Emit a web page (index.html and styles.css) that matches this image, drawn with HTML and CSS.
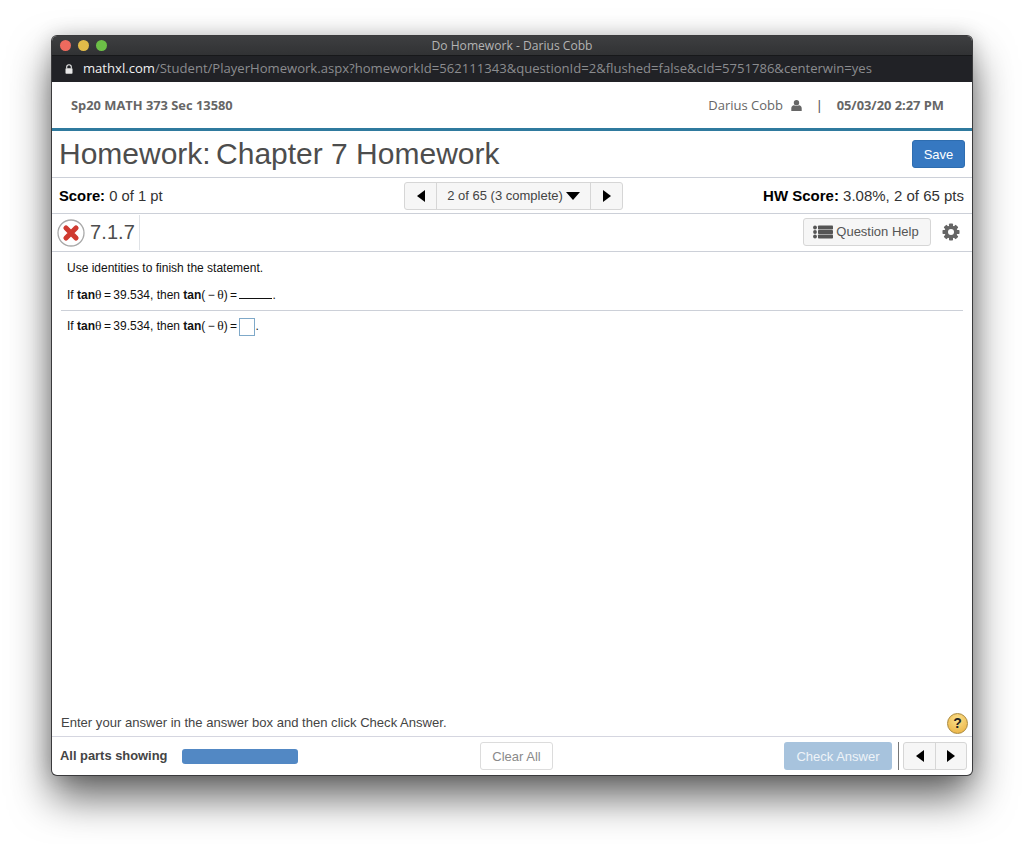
FILE: index.html
```html
<!DOCTYPE html>
<html lang="en">
<head>
    <meta charset="UTF-8">
    <title>Do Homework - Darius Cobb</title>
    <link rel="stylesheet" href="styles.css">
</head>
<body>
    <div class="window">
        <div class="titlebar">
            <div class="lights">
                <span class="light red"></span>
                <span class="light yellow"></span>
                <span class="light green"></span>
            </div>
            <span class="window-title">Do Homework - Darius Cobb</span>
        </div>
        <div class="urlbar">
            <svg class="lock" width="8" height="10" viewBox="0 0 8 10"><path d="M1.700 4.500V3a2.300 2.300 0 0 1 4.600 0v1.500" fill="none" stroke="#e8e8e8" stroke-width="1.100"/><rect x="0.500" y="4.300" width="7" height="5.400" rx="0.800" fill="#e8e8e8"/></svg>
            <span class="url"><span class="host">mathxl.com</span>/Student/PlayerHomework.aspx?homeworkId=562111343&amp;questionId=2&amp;flushed=false&amp;cId=5751786&amp;centerwin=yes</span>
        </div>

        <header class="course-bar">
            <span class="course">Sp20 MATH 373 Sec 13580</span>
            <div class="user-info">
                <span class="user-name">Darius Cobb</span>
                <svg class="user-icon" width="11" height="11" viewBox="0 0 11 11"><circle cx="5.500" cy="2.800" r="2.700" fill="#666"/><path d="M0.300 11V8.200C0.300 6.500 1.500 5.400 3 5.200c1.500 1 3.500 1 5 0 1.500 .2 2.700 1.300 2.700 3V11z" fill="#666"/></svg>
                <span class="sep">|</span>
                <span class="date">05/03/20 2:27 PM</span>
            </div>
        </header>

        <div class="title-row">
            <h1><span class="title-first">Homework:</span> Chapter 7 Homework</h1>
            <button class="btn-save">Save</button>
        </div>

        <div class="score-row">
            <div class="score"><b>Score:</b> 0 of 1 pt</div>
            <div class="pager">
                <span class="pager-arrow"><i class="tri-left"></i></span>
                <span class="pager-label">2 of 65 (3 complete)<i class="tri-down"></i></span>
                <span class="pager-arrow"><i class="tri-right"></i></span>
            </div>
            <div class="hw-score"><b>HW Score:</b> 3.08%, 2 of 65 pts</div>
        </div>

        <div class="question-row">
            <div class="question-id">
                <svg width="28" height="28" viewBox="0 0 28 28">
                    <circle cx="14" cy="14" r="13" fill="#fff" stroke="#a9a9a9" stroke-width="1.300"/>
                    <path d="M9 9L19 19M19 9L9 19" stroke="#cf3a30" stroke-width="5.200" stroke-linecap="round"/>
                </svg>
                <span class="question-num">7.1.7</span>
            </div>
            <div class="question-tools">
                <button class="btn-help">
                    <svg width="20" height="14" viewBox="0 0 20 14" fill="#555">
                        <circle cx="2" cy="2.500" r="1.900"/><circle cx="2" cy="7" r="1.900"/><circle cx="2" cy="11.500" r="1.900"/>
                        <rect x="5" y="0.500" width="15" height="4" rx="0.800"/><rect x="5" y="5" width="15" height="4" rx="0.800"/><rect x="5" y="9.500" width="15" height="4" rx="0.800"/>
                    </svg>
                    Question Help
                </button>
                <svg class="gear" width="18" height="18" viewBox="0 0 18 18">
                    <g fill="#666">
                        <rect x="7" y="0.500" width="4" height="17" rx="0.800"/>
                        <rect x="7" y="0.500" width="4" height="17" rx="0.800" transform="rotate(45 9 9)"/>
                        <rect x="7" y="0.500" width="4" height="17" rx="0.800" transform="rotate(90 9 9)"/>
                        <rect x="7" y="0.500" width="4" height="17" rx="0.800" transform="rotate(135 9 9)"/>
                        <circle cx="9" cy="9" r="6.500"/>
                    </g>
                    <circle cx="9" cy="9" r="3" fill="#fff"/>
                </svg>
            </div>
        </div>

        <main class="content">
            <p class="instr">Use identities to finish the statement.</p>
            <p class="stmt">If <b>tan</b><span class="theta">&#952;</span>&#8201;=&#8201;39.534, then <b>tan</b>(&#8201;&#8722;&#8201;<span class="theta">&#952;</span>)&#8201;=&#8201;<span class="blank"></span>.</p>
            <hr>
            <p class="stmt answer-line">If <b>tan</b><span class="theta">&#952;</span>&#8201;=&#8201;39.534, then <b>tan</b>(&#8201;&#8722;&#8201;<span class="theta">&#952;</span>)&#8201;=&#8201;<span class="answer-box"></span>.</p>
        </main>

        <div class="hint-row">
            <span class="hint-text">Enter your answer in the answer box and then click Check Answer.</span>
            <span class="help-ball">?</span>
        </div>

        <footer class="action-row">
            <div class="parts">
                <b>All parts showing</b>
                <span class="progress"></span>
            </div>
            <button class="btn-clear">Clear All</button>
            <div class="actions">
                <button class="btn-check">Check Answer</button>
                <span class="divider"></span>
                <div class="mini-pager">
                    <span class="mini-arrow"><i class="tri-left"></i></span>
                    <span class="mini-arrow"><i class="tri-right"></i></span>
                </div>
            </div>
        </footer>
    </div>
</body>
</html>
```

FILE: styles.css
```css
html, body {
    height: 100%;
}

body {
    margin: 0;
    padding: 36px 0 0 52px;
    box-sizing: border-box;
    background-color: #fff;
    font-family: "Liberation Sans", Arial, sans-serif;
    overflow: hidden;
}

.window {
    width: 920px;
    height: 739px;
    display: flex;
    flex-direction: column;
    background-color: #fff;
    border-radius: 5px;
    overflow: hidden;
    box-shadow: 0 0 0 1px #3a3a3c, 0 22px 42px rgba(0, 0, 0, 0.62), 0 0 20px rgba(0, 0, 0, 0.18);
}

.titlebar {
    height: 20px;
    flex: none;
    position: relative;
    display: flex;
    align-items: center;
    justify-content: center;
    background: linear-gradient(to bottom, #3e3f41, #313234);
    border-bottom: 1px solid #17181a;
    box-sizing: border-box;
}

.lights {
    position: absolute;
    left: 8px;
    top: 4px;
    display: flex;
    gap: 7px;
}

.light {
    width: 11px;
    height: 11px;
    border-radius: 50%;
}

.red { background-color: #ed6a5e; }
.yellow { background-color: #e2bb49; }
.green { background-color: #6cbf47; }

.window-title {
    font-family: "Open Sans", sans-serif;
    font-size: 12.100px;
    color: #b4b4b4;
}

.urlbar {
    height: 26px;
    flex: none;
    display: flex;
    align-items: center;
    gap: 10px;
    padding-left: 13px;
    background-color: #212226;
    box-sizing: border-box;
}

.url {
    margin-bottom: 2px;
    font-family: "Open Sans", sans-serif;
    font-size: 13.080px;
    color: #8b8c8f;
    white-space: nowrap;
}

.host {
    color: #f0f0f0;
}

.course-bar {
    height: 46px;
    flex: none;
    display: flex;
    align-items: center;
    justify-content: space-between;
    padding: 0 28px 0 19px;
    font-family: "Open Sans", sans-serif;
    font-size: 12.870px;
    color: #666;
}

.course, .date {
    font-weight: 700;
}

.user-info {
    display: flex;
    align-items: center;
}

.user-name {
    font-size: 13px;
}

.user-icon {
    margin-left: 8px;
}

.sep {
    margin: 0 14px;
    font-size: 12px;
    font-weight: 600;
    color: #555;
}

.title-row {
    height: 50px;
    flex: none;
    display: flex;
    align-items: center;
    justify-content: space-between;
    padding: 0 7px;
    border-top: 3px solid #2f7a9e;
    border-bottom: 1px solid #ccd0d8;
    box-sizing: border-box;
}

h1 {
    margin: 0;
    font-size: 30px;
    font-weight: 400;
    color: #4d4d4d;
    white-space: nowrap;
}

.title-first {
    margin-right: -3px;
}

.btn-save {
    width: 53px;
    height: 28px;
    padding: 0;
    background-color: #3678c1;
    border: 1px solid #2e6db0;
    border-radius: 3px;
    color: #fff;
    font: 13px "Liberation Sans", Arial, sans-serif;
}

.score-row {
    height: 36px;
    flex: none;
    display: grid;
    grid-template-columns: 1fr auto 1fr;
    align-items: center;
    padding: 0 8px 0 7px;
    border-bottom: 1px solid #ccd0d8;
    box-sizing: border-box;
    font-size: 14.800px;
    color: #333;
}

.score b, .hw-score b {
    color: #000;
}

.hw-score {
    text-align: right;
    font-size: 15px;
}

.pager {
    display: flex;
    height: 28px;
    margin-left: 4px;
    border: 1px solid #d6d6d6;
    border-radius: 3px;
    background-color: #f6f6f6;
    box-sizing: border-box;
    font-size: 13px;
}

.pager-arrow {
    width: 31px;
    display: flex;
    align-items: center;
    justify-content: center;
}

.pager-label {
    width: 153px;
    display: flex;
    align-items: center;
    justify-content: center;
    border-left: 1px solid #d6d6d6;
    border-right: 1px solid #d6d6d6;
    color: #444;
    white-space: nowrap;
}

.tri-left, .tri-right, .tri-down {
    display: block;
    width: 0;
    height: 0;
    border-style: solid;
    border-color: transparent;
}

.tri-left {
    border-width: 6px 8px 6px 0;
    border-right-color: #000;
}

.tri-right {
    border-width: 6px 0 6px 8px;
    border-left-color: #000;
}

.tri-down {
    margin-left: 3px;
    border-width: 8px 7px 0;
    border-top-color: #000;
}

.question-row {
    height: 38px;
    flex: none;
    display: flex;
    align-items: center;
    justify-content: space-between;
    padding-right: 12px;
    border-bottom: 1px solid #ccd0d8;
    box-sizing: border-box;
}

.question-id {
    height: 35px;
    display: flex;
    align-items: center;
    gap: 5px;
    padding: 0 4px 0 5px;
    border-right: 1px solid #dfe2e6;
}

.question-num {
    font-size: 20px;
    color: #4d4d4d;
    letter-spacing: 0.100px;
}

.question-tools {
    display: flex;
    align-items: center;
    gap: 11px;
    margin-bottom: 2px;
}

.btn-help {
    width: 128px;
    height: 28px;
    padding: 0 2px 0 0;
    display: flex;
    align-items: center;
    justify-content: center;
    gap: 3px;
    background-color: #f6f6f6;
    border: 1px solid #d6d6d6;
    border-radius: 3px;
    color: #555;
    font: 13px "Liberation Sans", Arial, sans-serif;
}

.content {
    flex: 1;
    padding: 9px 9px 0;
    font-size: 12px;
    color: #111;
}

.content p {
    margin: 0;
    padding-left: 6px;
}

.theta {
    font-family: "Liberation Serif", serif;
    font-size: 13.500px;
}

.instr {
    line-height: 14px;
}

.stmt {
    line-height: 14px;
}

.instr + .stmt {
    margin-top: 13px !important;
}

hr {
    margin: 8px 0 0;
    border: 0;
    border-top: 1px solid #ccd0d8;
}

.blank {
    display: inline-block;
    width: 33px;
    height: 1px;
    background-color: #111;
    vertical-align: baseline;
}

.answer-line {
    margin-top: 5px !important;
    line-height: 20px !important;
}

.answer-box {
    display: inline-block;
    width: 14px;
    height: 16px;
    border: 1px solid #7fa9c9;
    vertical-align: middle;
    background-color: #fff;
}

.hint-row {
    height: 25px;
    flex: none;
    display: flex;
    align-items: center;
    justify-content: space-between;
    padding: 0 4px 2px 9px;
    border-bottom: 1px solid #d5d6e0;
    box-sizing: border-box;
    font-size: 13.070px;
    color: #444;
}

.hint-text {
    margin-bottom: 2px;
}

.help-ball {
    width: 21px;
    height: 21px;
    flex: none;
    border-radius: 50%;
    border: 1px solid #a9883a;
    box-sizing: border-box;
    background: radial-gradient(circle at 50% 30%, #fbe08d, #e9ae3c);
    color: #222;
    font-size: 14px;
    font-weight: 700;
    line-height: 19px;
    text-align: center;
}

.action-row {
    height: 38px;
    flex: none;
    display: grid;
    grid-template-columns: 420px auto 1fr;
    align-items: center;
    padding: 0 5px 0 8px;
    font-size: 12.900px;
    color: #444;
}

.parts {
    display: flex;
    align-items: center;
    gap: 15px;
    margin-bottom: 2px;
}

.progress {
    width: 116px;
    height: 15px;
    margin: 2px 0 0 0;
    border-radius: 3px;
    background-color: #5288c4;
}

.btn-clear {
    width: 73px;
    height: 28px;
    padding: 0;
    background-color: #fff;
    border: 1px solid #dcdcdc;
    border-radius: 3px;
    color: #8a8a8a;
    font: 13px "Liberation Sans", Arial, sans-serif;
}

.actions {
    display: flex;
    align-items: center;
    justify-content: flex-end;
}

.btn-check {
    width: 108px;
    height: 28px;
    padding: 0;
    background-color: #a7c3dd;
    border: 0;
    border-radius: 3px;
    color: #eef3f8;
    font: 13px "Liberation Sans", Arial, sans-serif;
}

.divider {
    width: 1px;
    height: 28px;
    margin: 0 4px 0 6px;
    background-color: #777;
}

.mini-pager {
    display: flex;
    height: 28px;
    border: 1px solid #d6d6d6;
    border-radius: 3px;
    background-color: #f6f6f6;
    box-sizing: border-box;
}

.mini-arrow {
    width: 31px;
    box-sizing: border-box;
    display: flex;
    align-items: center;
    justify-content: center;
}

.mini-arrow + .mini-arrow {
    border-left: 1px solid #d6d6d6;
}
```
